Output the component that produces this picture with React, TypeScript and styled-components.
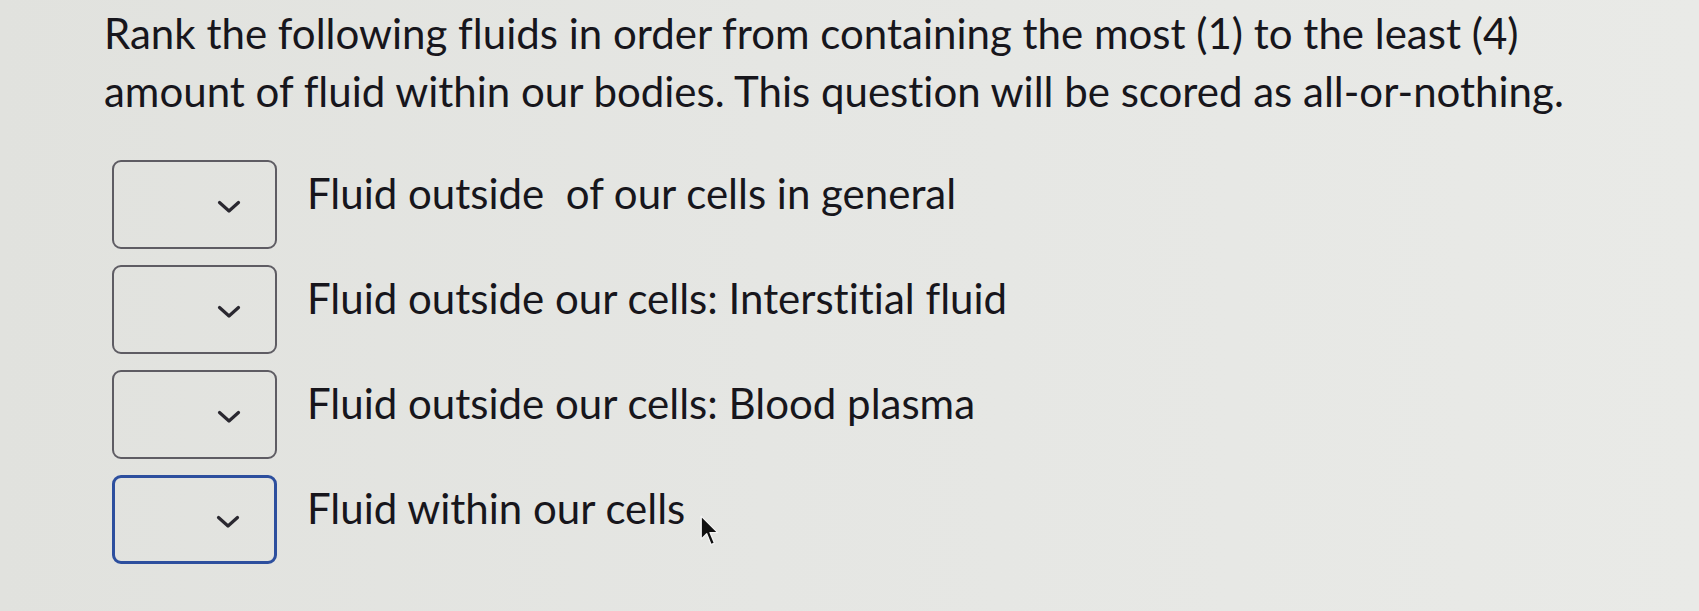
import styled, { createGlobalStyle } from "styled-components";

const GlobalStyle = createGlobalStyle`
  html, body {
    margin: 0;
    padding: 0;
  }
  body {
    background: linear-gradient(90deg, #e1e2de 0%, #e5e6e3 45%, #e9eae7 100%);
    font-family: Lato, "Open Sans", sans-serif;
    font-variant-ligatures: no-common-ligatures;
    font-feature-settings: "liga" 0;
    color: #17161c;
  }
`;

const items = [
  "Fluid outside  of our cells in general",
  "Fluid outside our cells: Interstitial fluid",
  "Fluid outside our cells: Blood plasma",
  "Fluid within our cells",
];

const Chevron = () => (
  <svg width="24" height="14" viewBox="0 0 24 14" fill="none">
    <polyline points="2.5,2.5 12,11 21.5,2.5" stroke="#2a2830" strokeWidth="3.2" strokeLinecap="round" strokeLinejoin="round" />
  </svg>
);

const Pointer = () => (
  <svg width="20" height="33" viewBox="0 0 18 30">
    <path d="M1 1 L1 22 L6 17 L10 27 L13 25.5 L9 16 L16 16 Z" fill="#111" stroke="#f4f4f4" strokeWidth="1.2" strokeLinejoin="round" />
  </svg>
);

const App = () => {
  return (
    <>
      <GlobalStyle />
      <Page>
        <Question>
          Rank the following fluids in order from containing the most (1) to the least (4)
          <br />
          amount of fluid within our bodies. This question will be scored as all-or-nothing.
        </Question>
        <List>
          {items.map((text, i) => (
            <Row key={i}>
              <Select $focused={i === items.length - 1}>
                <Chevron />
              </Select>
              <Label>
                {text}
                {i === items.length - 1 && (
                  <Cursor>
                    <Pointer />
                  </Cursor>
                )}
              </Label>
            </Row>
          ))}
        </List>
      </Page>
    </>
  );
};

const Page = styled.div`
  width: 1699px;
  height: 611px;
  box-sizing: border-box;
  padding: 4px 0 0 104px;
  overflow: hidden;
`;

const Question = styled.p`
  margin: 0;
  font-size: 42px;
  line-height: 58px;
  white-space: nowrap;
`;

const List = styled.div`
  display: flex;
  flex-direction: column;
  gap: 16px;
  margin-top: 40px;
  padding-left: 8px;
`;

const Row = styled.div`
  display: flex;
  align-items: flex-start;
  gap: 30px;
`;

const Select = styled.div<{ $focused?: boolean }>`
  width: 165px;
  height: 89px;
  box-sizing: border-box;
  flex-shrink: 0;
  display: flex;
  align-items: center;
  justify-content: flex-end;
  padding-right: 34px;
  padding-top: 4px;
  border: ${(p) => (p.$focused ? "3px solid #2d4f9e" : "2px solid #5e5c63")};
  border-radius: 9px;
  background: transparent;
`;

const Label = styled.div`
  position: relative;
  font-size: 42px;
  line-height: 48px;
  padding-top: 9px;
  white-space: pre;
`;

const Cursor = styled.span`
  position: absolute;
  left: calc(100% + 15px);
  top: 33px;
`;

export default App;
